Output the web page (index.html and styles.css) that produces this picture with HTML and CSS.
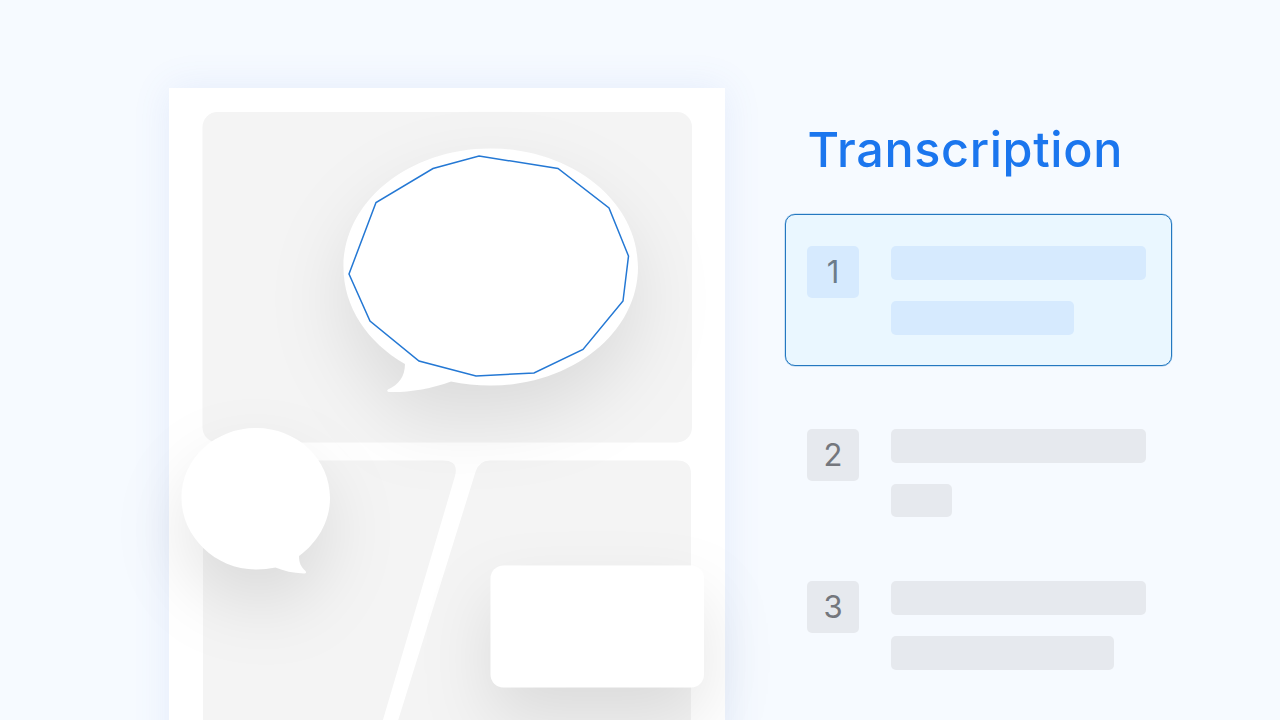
FILE: index.html
```html
<!DOCTYPE html>
<html lang="en">
<head>
<meta charset="utf-8">
<title>Transcription</title>
<link rel="stylesheet" href="styles.css">
</head>
<body>
<main class="stage">
  <section class="sheet">
    <svg class="comic" viewBox="169 88 556 632" width="556" height="632" aria-hidden="true">
      <g class="panel">
        <rect x="202.500" y="112" width="489.500" height="330.500" rx="15"/>
        <path d="M203 740V474Q203 460.500 216 460.500H443Q459 460.500 455 476L377 740Z"/>
        <path d="M392 740L475.500 472Q479 460.500 490 460.500H677Q691 460.500 691 474V740Z"/>
      </g>
      <path class="bubble bubble-large" d="M490.500 148.500C572 148.500 638 201.500 638 267C638 332.500 572 385.500 490.500 385.500Q470 385.500 451 381.500C431 389 408 392.500 389 392Q386 391.500 388 389.500C399 385 405 376 405 364C367 342 343.500 307 343.500 267C343.500 201.500 409 148.500 490.500 148.500Z"/>
      <path class="bubble bubble-small" d="M256 428C297 428 330 459 330 498C330 522 317 543 299 556C299 563 301 567 305.500 571Q307 573.500 304 573.500C293 573 284 571 275.500 567.500Q266 569.500 256 569.500C215 569.500 181.500 536 181.500 498C181.500 459 215 428 256 428Z"/>
      <rect class="bubble bubble-box" x="490.500" y="565.500" width="213.500" height="122" rx="13"/>
      <polygon class="outline" points="479,156 558,168.500 609,208 628.500,256 623,301 583,349.500 534,373 476,376 419,361 370,321 349,274 376,202.500 433,168.500"/>
    </svg>
  </section>
  <section class="transcript">
    <h1 class="title">Transcription</h1>
    <ol class="entries">
      <li class="entry active"><span class="number">1</span><div class="lines"><span class="line full"></span><span class="line medium"></span></div></li>
      <li class="entry"><span class="number">2</span><div class="lines"><span class="line full"></span><span class="line short"></span></div></li>
      <li class="entry"><span class="number">3</span><div class="lines"><span class="line full"></span><span class="line long"></span></div></li>
    </ol>
  </section>
</main>
</body>
</html>
```
FILE: styles.css
```css
* { box-sizing: border-box; }
body { margin: 0; background: #f6faff; font-family: Inter, "Liberation Sans", sans-serif; }
.stage { display: flex; width: 1280px; height: 720px; padding: 88px 108px 0 169px; gap: 60px; overflow: hidden; }
.sheet { width: 556px; height: 680px; flex: none; background: #fff; box-shadow: 0 0 36px rgba(80, 115, 215, .11); }
.comic { display: block; overflow: visible; }
.panel { fill: #f4f4f4; }
.bubble { fill: #fff; }
.bubble-large { filter: drop-shadow(0 32px 38px rgba(0, 0, 0, .1)); }
.bubble-small, .bubble-box { filter: drop-shadow(0 32px 34px rgba(0, 0, 0, .1)); }
.outline { fill: none; stroke: #2478d4; stroke-width: 1.5; }
.transcript { width: 387px; padding-top: 33px; }
.title { margin: 0 0 34px 22.500px; font-size: 48.5px; line-height: 58px; font-weight: 500; letter-spacing: .65px; color: #1b76ee; white-space: nowrap; }
.entries { display: grid; margin: 0; padding: 0; list-style: none; }
.entry { display: flex; gap: 32.400px; height: 152.300px; padding: 0 22px; }
.entry.active { position: relative; height: 216px; padding: 33px 22px; }
.entry.active::before { content: ""; position: absolute; inset: .500px 0 63.500px; z-index: -1; border: 1px solid #2478c0; border-radius: 10px; background: #eaf7ff; box-shadow: 0 0 0 .5px rgba(43, 130, 206, .4); }
.number { display: block; width: 52px; height: 52px; flex: none; border-radius: 5px; background: #e6e9ee; font-size: 31px; line-height: 51px; text-align: center; font-weight: 430; color: #74777d; }
.lines { display: grid; align-content: start; gap: 21px; }
.line { height: 33.700px; border-radius: 5px; background: #e6e9ee; }
.active .line { height: 34px; }
.full { width: 254.500px; }
.medium { width: 183px; }
.short { width: 61px; }
.long { width: 223px; }
.active .number, .active .line { background: #d6eafe; }
.active .number { color: #6c7c8a; line-height: 52px; }
```
